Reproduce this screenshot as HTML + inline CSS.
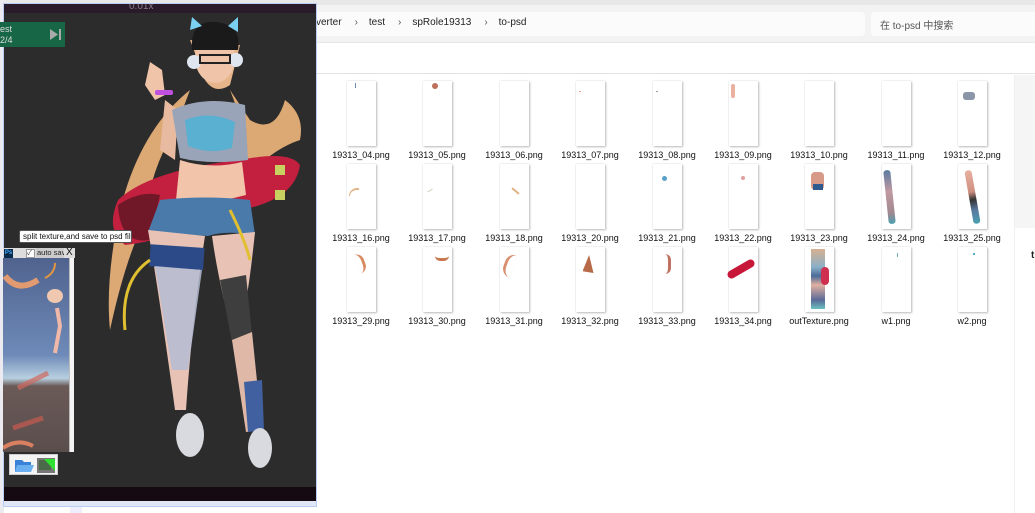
<!DOCTYPE html>
<html><head><meta charset="utf-8"><style>
*{margin:0;padding:0;box-sizing:border-box}
body{width:1035px;height:513px;overflow:hidden;background:#fff;font-family:"Liberation Sans","Noto Sans CJK SC",sans-serif;position:relative}
.a{position:absolute}
.item{position:absolute;width:76px;text-align:center;font-size:9px;color:#111}
.th{width:29px;height:65px;margin:0 auto;background:#fff;box-shadow:1px 1px 2px #bbb,0 0 1px #ccc;position:relative}
.lb{margin-top:4px;white-space:nowrap}
.sep{margin:0 11px 0 13px;color:#555}
</style></head><body>
<div class="a" style="left:0;top:0;width:1035px;height:5px;background:#e8e8e8"></div>
<div class="a" style="left:0;top:5px;width:1035px;height:37px;background:#f3f3f3"></div>
<div class="a" style="left:312px;top:12px;width:553px;height:24px;background:#fbfbfb;border-radius:4px"></div>
<div class="a" style="left:871px;top:12px;width:170px;height:24px;background:#fbfbfb;border-radius:4px"></div>
<div class="a" style="left:316px;top:17px;font-size:10px;color:#222;white-space:nowrap">verter<span class="sep">›</span>test<span class="sep">›</span>spRole19313<span class="sep">›</span>to-psd</div>
<div class="a" style="left:880px;top:17px;font-size:10px;color:#555;white-space:nowrap">在 to-psd 中搜索</div>
<div class="a" style="left:0;top:42px;width:1035px;height:32px;background:#fff;border-top:1px solid #e6e6e6;border-bottom:1px solid #e2e2e2"></div>
<div class="a" style="left:1015px;top:75px;width:20px;height:153px;background:#f5f5f5"></div>
<div class="a" style="left:1014px;top:75px;width:1px;height:438px;background:#f0f0f0"></div>
<div class="a" style="left:1031px;top:250px;font-size:10px;font-weight:bold;color:#222">t</div>

<div class="item" style="left:323px;top:81px"><div class="th"><div class="a" style="left:8px;top:2px;width:3px;height:5px;border-left:1px solid #6a8ab0"></div></div><div class="lb">19313_04.png</div></div>
<div class="item" style="left:399px;top:81px"><div class="th"><div class="a" style="left:9px;top:2px;width:6px;height:6px;border-radius:50%;background:#c0705a"></div></div><div class="lb">19313_05.png</div></div>
<div class="item" style="left:476px;top:81px"><div class="th"></div><div class="lb">19313_06.png</div></div>
<div class="item" style="left:552px;top:81px"><div class="th"><div class="a" style="left:3px;top:10px;width:2px;height:1px;background:#e99"></div></div><div class="lb">19313_07.png</div></div>
<div class="item" style="left:629px;top:81px"><div class="th"><div class="a" style="left:3px;top:10px;width:2px;height:1px;background:#99a"></div></div><div class="lb">19313_08.png</div></div>
<div class="item" style="left:705px;top:81px"><div class="th"><div class="a" style="left:2px;top:3px;width:4px;height:14px;background:#eab0a0;border-radius:2px"></div></div><div class="lb">19313_09.png</div></div>
<div class="item" style="left:781px;top:81px"><div class="th"></div><div class="lb">19313_10.png</div></div>
<div class="item" style="left:858px;top:81px"><div class="th"></div><div class="lb">19313_11.png</div></div>
<div class="item" style="left:934px;top:81px"><div class="th"><div class="a" style="left:5px;top:11px;width:12px;height:8px;background:#8a96a8;border-radius:3px"></div></div><div class="lb">19313_12.png</div></div>

<div class="item" style="left:323px;top:164px"><div class="th"><div class="a" style="left:2px;top:24px;width:10px;height:8px;border-top:2px solid #e5b488;border-left:1px solid #e5b488;border-radius:8px 0 0 0"></div></div><div class="lb">19313_16.png</div></div>
<div class="item" style="left:399px;top:164px"><div class="th"><div class="a" style="left:4px;top:26px;width:6px;height:1px;background:#ccb;transform:rotate(-30deg)"></div></div><div class="lb">19313_17.png</div></div>
<div class="item" style="left:476px;top:164px"><div class="th"><div class="a" style="left:11px;top:26px;width:9px;height:2px;background:#e2b080;transform:rotate(40deg)"></div></div><div class="lb">19313_18.png</div></div>
<div class="item" style="left:552px;top:164px"><div class="th"></div><div class="lb">19313_20.png</div></div>
<div class="item" style="left:629px;top:164px"><div class="th"><div class="a" style="left:9px;top:12px;width:5px;height:5px;border-radius:50%;background:#5aa0c8"></div></div><div class="lb">19313_21.png</div></div>
<div class="item" style="left:705px;top:164px"><div class="th"><div class="a" style="left:12px;top:12px;width:4px;height:4px;border-radius:50%;background:#e0a0a0"></div></div><div class="lb">19313_22.png</div></div>
<div class="item" style="left:781px;top:164px"><div class="th"><div class="a" style="left:6px;top:8px;width:13px;height:18px;background:#d79a88;border-radius:4px"></div><div class="a" style="left:8px;top:20px;width:10px;height:6px;background:#2e5a90"></div></div><div class="lb">19313_23.png</div></div>
<div class="item" style="left:858px;top:164px"><div class="th"><div class="a" style="left:4px;top:6px;width:7px;height:54px;background:linear-gradient(#5a7aa0,#c09aa0 40%,#a08890 80%,#4aa0b0);transform:rotate(-6deg);border-radius:3px"></div></div><div class="lb">19313_24.png</div></div>
<div class="item" style="left:934px;top:164px"><div class="th"><div class="a" style="left:11px;top:6px;width:7px;height:54px;background:linear-gradient(#e8b0a0,#d09080 40%,#333 55%,#5a7aa0 75%,#4aa0b0);transform:rotate(-10deg);border-radius:3px"></div></div><div class="lb">19313_25.png</div></div>

<div class="item" style="left:323px;top:247px"><div class="th"><div class="a" style="left:10px;top:6px;width:8px;height:20px;border-right:3px solid #d88a60;border-radius:0 10px 10px 0;transform:rotate(-20deg)"></div></div><div class="lb">19313_29.png</div></div>
<div class="item" style="left:399px;top:247px"><div class="th"><div class="a" style="left:12px;top:9px;width:14px;height:5px;border-bottom:3px solid #c87850;border-radius:0 0 8px 8px"></div></div><div class="lb">19313_30.png</div></div>
<div class="item" style="left:476px;top:247px"><div class="th"><div class="a" style="left:4px;top:6px;width:10px;height:24px;border-left:3px solid #d89070;border-radius:10px 0 0 10px;transform:rotate(20deg)"></div></div><div class="lb">19313_31.png</div></div>
<div class="item" style="left:552px;top:247px"><div class="th"><div class="a" style="left:7px;top:8px;width:11px;height:18px;background:#b86a48;clip-path:polygon(60% 0,100% 100%,0 90%)"></div></div><div class="lb">19313_32.png</div></div>
<div class="item" style="left:629px;top:247px"><div class="th"><div class="a" style="left:12px;top:7px;width:6px;height:20px;border-right:3px solid #c07060;border-radius:0 8px 8px 0"></div></div><div class="lb">19313_33.png</div></div>
<div class="item" style="left:705px;top:247px"><div class="th"><div class="a" style="left:-3px;top:18px;width:30px;height:8px;background:#c8183a;border-radius:4px;transform:rotate(-30deg)"></div></div><div class="lb">19313_34.png</div></div>
<div class="item" style="left:781px;top:247px"><div class="th"><div class="a" style="left:6px;top:2px;width:14px;height:60px;background:linear-gradient(#d8b090,#8ab0c8 30%,#4a6a98 45%,#e0b0a0 60%,#5a6a98 85%,#6ac0c0)"></div><div class="a" style="left:16px;top:20px;width:8px;height:18px;background:#d03050;border-radius:4px"></div></div><div class="lb">outTexture.png</div></div>
<div class="item" style="left:858px;top:247px"><div class="th"><div class="a" style="left:15px;top:6px;width:1px;height:4px;background:#7ab"></div></div><div class="lb">w1.png</div></div>
<div class="item" style="left:934px;top:247px"><div class="th"><div class="a" style="left:15px;top:6px;width:2px;height:2px;background:#5ac"></div></div><div class="lb">w2.png</div></div>

<div class="a" style="left:0;top:0;width:4px;height:513px;background:#eaeaf0"></div>
<div class="a" style="left:70px;top:500px;width:12px;height:13px;background:#eef"></div>
<div class="a" style="left:3px;top:3px;width:314px;height:504px;background:#dfe6f6;border:1px solid #b8cdf0"></div>
<div class="a" style="left:4px;top:4px;width:312px;height:9px;background:#2a1b2a;overflow:hidden"><span style="position:absolute;left:125px;top:-3px;font-size:10px;color:#8a7a8a">0.01x</span></div>
<div class="a" style="left:4px;top:13px;width:312px;height:474px;background:#2c2c2c"></div>
<div class="a" style="left:4px;top:487px;width:312px;height:14px;background:#150a12"></div>
<div class="a" style="left:0;top:22px;width:65px;height:25px;background:#176747;color:#ddd;font-size:9px;line-height:11px;padding:2px 0 0 0">est<br>2/4</div>
<svg class="a" style="left:50px;top:29px" width="12" height="11"><polygon points="0,0 8,5.5 0,11" fill="#aaa"/><rect x="9" y="0" width="2" height="11" fill="#aaa"/></svg>

<!-- character, absolute coords -->
<svg class="a" style="left:0;top:0" width="316" height="487">
<defs><clipPath id="c"><rect x="4" y="13" width="312" height="474"/></clipPath></defs>
<g clip-path="url(#c)">
<path d="M190,90 Q140,130 120,210 Q105,280 110,330 Q125,260 145,220 Q150,170 175,130 Z" fill="#dca874"/>
<path d="M230,90 Q250,140 245,180 Q270,150 300,140 Q305,115 285,100 Q275,135 250,120 Z" fill="#dca874"/>
<path d="M118,200 Q150,170 240,160 Q290,150 300,165 Q295,200 240,210 Q170,240 125,245 Q105,230 118,200 Z" fill="#c2203e"/>
<path d="M118,205 Q140,190 160,195 L150,240 Q120,245 118,205 Z" fill="#701828"/>
<rect x="275" y="165" width="10" height="10" fill="#c8d060"/>
<rect x="275" y="190" width="10" height="10" fill="#c8d060"/>
<path d="M190,40 L205,80 Q215,95 230,85 L240,45 Z" fill="#e6b58a"/>
<ellipse cx="215" cy="58" rx="20" ry="25" fill="#f0c4a8"/>
<path d="M192,50 Q190,20 215,22 Q242,24 238,50 Z" fill="#1a1a1a"/>
<polygon points="190,30 192,17 202,26" fill="#7ad0f0"/><polygon points="228,26 238,17 238,32" fill="#7ad0f0"/>
<circle cx="194" cy="62" r="7" fill="#e0e6f0"/><circle cx="236" cy="60" r="7" fill="#e0e6f0"/>
<rect x="200" y="55" width="30" height="8" fill="none" stroke="#222" stroke-width="2"/>
<path d="M150,62 L145,85 L155,100 L165,95 L162,70 Z" fill="#f0c4a8"/>
<rect x="155" y="90" width="18" height="5" fill="#c050e0" rx="2"/>
<path d="M165,100 L160,150 L175,160 L178,110 Z" fill="#e8bba0"/>
<path d="M172,110 Q205,95 245,105 L248,160 Q210,165 180,158 Z" fill="#9aa4b8"/>
<path d="M185,120 Q210,110 235,122 L232,148 Q210,155 188,146 Z" fill="#5ab0d0"/>
<path d="M180,160 Q210,170 242,162 L246,195 Q210,205 176,200 Z" fill="#f2c4aa"/>
<path d="M160,200 Q205,195 250,200 L255,235 Q225,230 208,236 L148,232 Z" fill="#4a7aaa"/>
<path d="M148,230 L205,236 Q192,320 186,410 L175,410 Q160,300 148,230 Z" fill="#e8c2b4"/>
<rect x="150" y="246" width="54" height="22" fill="#2c4a88" transform="rotate(4 175 255)"/>
<path d="M155,266 L202,270 L188,370 L172,370 Z" fill="#b4bcd4" opacity=".85"/>
<path d="M212,236 L255,232 Q250,280 246,300 L224,300 Q216,265 212,236 Z" fill="#e8c2b4"/>
<path d="M220,280 L246,275 L252,335 L232,342 Z" fill="#3e3e3e"/>
<path d="M232,340 L252,332 L262,430 L246,432 Z" fill="#e0b8a8"/>
<path d="M244,382 L262,380 L264,430 L248,432 Z" fill="#4060a0"/>
<ellipse cx="190" cy="435" rx="14" ry="22" fill="#d8dae0"/>
<ellipse cx="260" cy="448" rx="12" ry="20" fill="#d8dae0"/>
<path d="M125,330 Q120,280 150,260 M230,210 Q245,240 250,260" stroke="#e0c030" stroke-width="3" fill="none"/>
</g>
</svg>

<div class="a" style="left:19px;top:230px;width:113px;height:13px;background:#fff;border:1px solid #555;border-radius:2px;font-size:8px;line-height:11px;padding-left:3px;color:#111;white-space:nowrap;overflow:hidden">split texture,and save to psd file</div>
<div class="a" style="left:3px;top:248px;width:72px;height:10px;background:#ddd"></div>
<div class="a" style="left:4px;top:249px;width:9px;height:9px;background:#0a2a4a;color:#4af;font-size:6px;font-weight:bold;line-height:9px;text-align:center">Ps</div>
<div class="a" style="left:26px;top:249px;width:9px;height:9px;background:#fff;border:1px solid #999;font-size:7px;line-height:7px;color:#333">✓</div>
<div class="a" style="left:36px;top:248px;font-size:7.5px;color:#222;background:#ccc;height:10px;line-height:10px;padding:0 1px;width:28px;overflow:hidden;white-space:nowrap">auto save</div>
<div class="a" style="left:66px;top:247px;font-size:10px;color:#111">X</div>
<div class="a" style="left:3px;top:258px;width:66px;height:194px;background:linear-gradient(#50638e 0%,#6e8ab8 50%,#b8d0e0 62%,#6a5a58 66%,#5a4e4c 100%)"></div>
<svg class="a" style="left:3px;top:258px" width="66" height="194">
<path d="M2,18 Q15,35 35,22" stroke="#e29a70" stroke-width="6" fill="none"/>
<path d="M42,20 Q52,15 52,5" stroke="#e39540" stroke-width="2" fill="none"/>
<ellipse cx="52" cy="38" rx="8" ry="7" fill="#f0c8b0"/>
<path d="M54,50 L57,68 L52,95" stroke="#f0b8a8" stroke-width="4" fill="none"/>
<path d="M15,130 L45,115" stroke="#d06a60" stroke-width="5" opacity=".7"/>
<path d="M10,170 L40,160" stroke="#c85a50" stroke-width="5" opacity=".7"/>
<path d="M0,190 Q15,180 30,188" stroke="#d88060" stroke-width="4" fill="none"/>
</svg>
<div class="a" style="left:69px;top:258px;width:5px;height:194px;background:#f4f4f4;border-left:1px solid #bbb"></div>
<div class="a" style="left:9px;top:454px;width:49px;height:21px;background:#f4f4f4;border:1px solid #ccc"></div>
<svg class="a" style="left:14px;top:456px" width="42" height="18"><path d="M1,4 L8,4 L10,6 L17,6 L17,16 L1,16 Z" fill="#3a82d8"/><path d="M3,9 L20,9 L17,16 L1,16 Z" fill="#6ab0f0"/><rect x="23" y="2" width="18" height="15" fill="#777"/><rect x="25" y="4" width="12" height="10" fill="#4a6a4a"/><polygon points="30,3 41,3 41,15" fill="#30e030"/></svg>
</body></html>
